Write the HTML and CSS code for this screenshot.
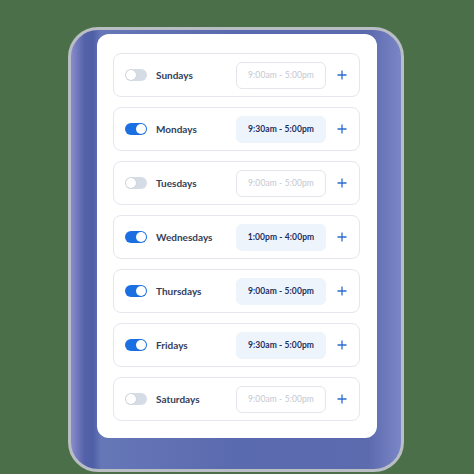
FILE: index.html
```html
<!DOCTYPE html>
<html>
<head>
<meta charset="utf-8">
<link rel="stylesheet" href="styles.css">
</head>
<body>
<div class="stage">
  <div class="halo">
    <div class="card">
      <div class="row">
        <span class="toggle"></span><span class="day">Sundays</span>
        <span class="time">9:00am - 5:00pm</span>
        <span class="plus"><svg viewBox="0 0 10 10" width="10" height="10"><path d="M5 0.5V9.5M0.5 5H9.5"/></svg></span>
      </div>
      <div class="row on">
        <span class="toggle"></span><span class="day">Mondays</span>
        <span class="time">9:30am - 5:00pm</span>
        <span class="plus"><svg viewBox="0 0 10 10" width="10" height="10"><path d="M5 0.5V9.5M0.5 5H9.5"/></svg></span>
      </div>
      <div class="row">
        <span class="toggle"></span><span class="day">Tuesdays</span>
        <span class="time">9:00am - 5:00pm</span>
        <span class="plus"><svg viewBox="0 0 10 10" width="10" height="10"><path d="M5 0.5V9.5M0.5 5H9.5"/></svg></span>
      </div>
      <div class="row on">
        <span class="toggle"></span><span class="day">Wednesdays</span>
        <span class="time">1:00pm - 4:00pm</span>
        <span class="plus"><svg viewBox="0 0 10 10" width="10" height="10"><path d="M5 0.5V9.5M0.5 5H9.5"/></svg></span>
      </div>
      <div class="row on">
        <span class="toggle"></span><span class="day">Thursdays</span>
        <span class="time">9:00am - 5:00pm</span>
        <span class="plus"><svg viewBox="0 0 10 10" width="10" height="10"><path d="M5 0.5V9.5M0.5 5H9.5"/></svg></span>
      </div>
      <div class="row on">
        <span class="toggle"></span><span class="day">Fridays</span>
        <span class="time">9:30am - 5:00pm</span>
        <span class="plus"><svg viewBox="0 0 10 10" width="10" height="10"><path d="M5 0.5V9.5M0.5 5H9.5"/></svg></span>
      </div>
      <div class="row">
        <span class="toggle"></span><span class="day">Saturdays</span>
        <span class="time">9:00am - 5:00pm</span>
        <span class="plus"><svg viewBox="0 0 10 10" width="10" height="10"><path d="M5 0.5V9.5M0.5 5H9.5"/></svg></span>
      </div>
    </div>
  </div>
</div>
</body>
</html>
```
FILE: styles.css
```css
html, body {
  margin: 0;
  padding: 0;
  background: #4b6f49;
  width: 474px;
  height: 474px;
  overflow: hidden;
  font-family: "Lato", "Noto Sans", sans-serif;
}
.stage {
  padding: 27px 0 0 68px;
}
.halo {
  box-sizing: border-box;
  width: 336px;
  height: 445px;
  border: 3px solid #b9bdc4;
  border-radius: 30px;
  padding: 4px 24px 31px 26px;
  background: linear-gradient(90deg, #8a8ccc 0px, #5261a8 14px, #4f5fa6 22px, #6677b8 30px, #5a6aae 50%, #5c6aae 90%, #7a86c6 100%);
}
.card {
  box-sizing: border-box;
  width: 280px;
  height: 404px;
  background: #ffffff;
  border-radius: 12px;
  padding: 19px 17px 17px 16px;
  display: flex;
  flex-direction: column;
  gap: 10px;
}
.row {
  box-sizing: border-box;
  height: 44px;
  border: 1px solid #e4e7ed;
  border-radius: 8px;
  display: flex;
  align-items: center;
  padding: 0 6px 0 11px;
}
.toggle {
  position: relative;
  width: 22px;
  height: 12px;
  border-radius: 6px;
  background: #d6dce6;
  flex: none;
}
.toggle::after {
  content: "";
  position: absolute;
  top: 1px;
  left: 1px;
  width: 10px;
  height: 10px;
  border-radius: 50%;
  background: #ffffff;
  box-shadow: 0 0 0 0.5px #c9d0db;
}
.row.on .toggle {
  background: #1a6fe3;
}
.row.on .toggle::after {
  left: 11px;
  box-shadow: none;
}
.day {
  margin-left: 9px;
  flex: 1;
  font-size: 10px;
  font-weight: 700;
  color: #34405a;
}
.time {
  box-sizing: border-box;
  width: 90px;
  height: 27px;
  border: 1px solid #e3e6eb;
  border-radius: 6px;
  display: flex;
  align-items: center;
  justify-content: center;
  font-size: 8.5px;
  color: #c3c8d1;
  letter-spacing: 0.1px;
}
.row.on .time {
  background: #eef4fc;
  border-color: #eef4fc;
  color: #1f2f5c;
  font-weight: 700;
}
.plus {
  width: 22px;
  margin-left: 5px;
  display: flex;
  justify-content: center;
  align-items: center;
}
.plus svg {
  display: block;
  fill: none;
  stroke: #2a6dd2;
  stroke-width: 1.3;
}
```
